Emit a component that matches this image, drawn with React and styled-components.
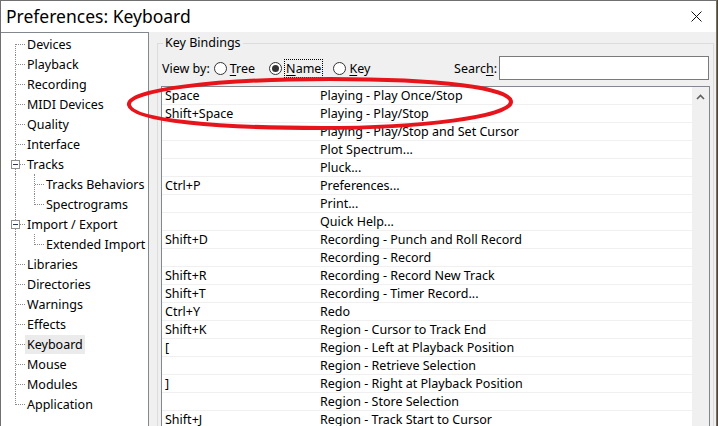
import React from "react";
import styled, { createGlobalStyle, css } from "styled-components";

const GlobalStyle = createGlobalStyle`
  html, body {
    margin: 0;
    padding: 0;
    background: #5b4528;
    overflow: hidden;
  }
  body {
    font-family: "Noto Sans", "Open Sans", sans-serif;
    font-size: 12.5px;
    color: #000;
  }
  * {
    box-sizing: border-box;
  }
`;

const treeItems = [
  { label: "Devices", level: 0, kind: "first" },
  { label: "Playback", level: 0, kind: "tee" },
  { label: "Recording", level: 0, kind: "tee" },
  { label: "MIDI Devices", level: 0, kind: "tee" },
  { label: "Quality", level: 0, kind: "tee" },
  { label: "Interface", level: 0, kind: "tee" },
  { label: "Tracks", level: 0, kind: "tee", box: true },
  { label: "Tracks Behaviors", level: 1, kind: "tee" },
  { label: "Spectrograms", level: 1, kind: "last" },
  { label: "Import / Export", level: 0, kind: "tee", box: true },
  { label: "Extended Import", level: 1, kind: "last" },
  { label: "Libraries", level: 0, kind: "tee" },
  { label: "Directories", level: 0, kind: "tee" },
  { label: "Warnings", level: 0, kind: "tee" },
  { label: "Effects", level: 0, kind: "tee" },
  { label: "Keyboard", level: 0, kind: "tee", selected: true },
  { label: "Mouse", level: 0, kind: "tee" },
  { label: "Modules", level: 0, kind: "tee" },
  { label: "Application", level: 0, kind: "last" },
];

const bindings = [
  ["Space", "Playing - Play Once/Stop"],
  ["Shift+Space", "Playing - Play/Stop"],
  ["", "Playing - Play/Stop and Set Cursor"],
  ["", "Plot Spectrum..."],
  ["", "Pluck..."],
  ["Ctrl+P", "Preferences..."],
  ["", "Print..."],
  ["", "Quick Help..."],
  ["Shift+D", "Recording - Punch and Roll Record"],
  ["", "Recording - Record"],
  ["Shift+R", "Recording - Record New Track"],
  ["Shift+T", "Recording - Timer Record..."],
  ["Ctrl+Y", "Redo"],
  ["Shift+K", "Region - Cursor to Track End"],
  ["[", "Region - Left at Playback Position"],
  ["", "Region - Retrieve Selection"],
  ["]", "Region - Right at Playback Position"],
  ["", "Region - Store Selection"],
  ["Shift+J", "Region - Track Start to Cursor"],
];

const App = () => {
  return (
    <>
      <GlobalStyle />
      <Window>
        <TitleBar>
          <Title>Preferences: Keyboard</Title>
          <Close viewBox="0 0 11 11">
            <path d="M0.5 0.5 L10.5 10.5 M10.5 0.5 L0.5 10.5" />
          </Close>
        </TitleBar>

        <Body>
          <Tree>
            {treeItems.map((item) => (
              <TreeRow key={item.label}>
                {item.level === 1 && <Branch $kind="pipe" />}
                <Branch $kind={item.kind}>
                  {item.box && <ExpandBox />}
                </Branch>
                <TreeLabel $selected={item.selected}>{item.label}</TreeLabel>
              </TreeRow>
            ))}
          </Tree>

          <Content>
            <GroupBox>
              <Legend>Key Bindings</Legend>

              <ViewRow>
                <span>View by:</span>
                <Option $gap={4}>
                  <Radio />
                  <span>
                    <Mnemonic>T</Mnemonic>ree
                  </span>
                </Option>
                <Option $gap={14}>
                  <Radio $checked />
                  <Focused>
                    <Mnemonic>N</Mnemonic>ame
                  </Focused>
                </Option>
                <Option $gap={11}>
                  <Radio />
                  <span>
                    <Mnemonic>K</Mnemonic>ey
                  </span>
                </Option>

                <Search>
                  <span>
                    Searc<Mnemonic>h</Mnemonic>:
                  </span>
                  <SearchInput />
                </Search>
              </ViewRow>

              <List>
                <Rows>
                  {bindings.map(([key, action], i) => (
                    <Row key={i}>
                      <KeyCell>{key}</KeyCell>
                      <span>{action}</span>
                    </Row>
                  ))}
                </Rows>
                <ScrollBar>
                  <svg width="9" height="6" viewBox="0 0 9 6">
                    <path d="M1 5 L4.5 1.5 L8 5" fill="none" stroke="#606060" strokeWidth="1.6" />
                  </svg>
                </ScrollBar>
              </List>
            </GroupBox>
          </Content>
        </Body>

        {/* hand drawn red annotation over the first two rows */}
        <Annotation viewBox="0 0 718 426">
          <path d="M129 105 C126 90 215 79 330 79 C440 79 512 88 511 102 C510 117 420 128 322 128 C220 128 132 121 129 105 Z" />
        </Annotation>
      </Window>
    </>
  );
};

export default App;

const Window = styled.div`
  position: relative;
  width: 717px;
  height: 426px;
  overflow: hidden;
  background: #f0f0f0;
  border: 1px solid #707070;
  border-bottom: none;
  display: flex;
  flex-direction: column;
`;

const TitleBar = styled.div`
  height: 31px;
  flex: none;
  background: #fff;
  display: flex;
  align-items: center;
  justify-content: space-between;
  padding: 0 14px 0 5px;
`;

const Title = styled.div`
  font-size: 17.5px;
  line-height: 22px;
  color: #000;
  margin-top: -2px;
`;

const Close = styled.svg`
  width: 11px;
  height: 11px;
  margin-top: -1px;
  stroke: #111;
  stroke-width: 1;
  fill: none;
`;

const Body = styled.div`
  flex: 1;
  display: flex;
  min-height: 0;
`;

const Tree = styled.div`
  width: 148px;
  flex: none;
  background: #fff;
  border-top: 1px solid #828790;
  border-right: 1px solid #828790;
  padding: 1px 0 0 5px;
`;

const TreeRow = styled.div`
  height: 20px;
  display: flex;
  align-items: center;
`;

const dotted = "1px dotted #8a8a8a";

const Branch = styled.span`
  position: relative;
  width: 19px;
  height: 20px;
  flex: none;

  &::before {
    content: "";
    position: absolute;
    left: 9px;
    top: ${(p) => (p.$kind === "first" ? "10px" : "0")};
    height: ${(p) => (p.$kind === "first" || p.$kind === "last" ? "11px" : "20px")};
    border-left: ${dotted};
  }

  ${(p) =>
    p.$kind !== "pipe" &&
    css`
      &::after {
        content: "";
        position: absolute;
        left: 10px;
        top: 10px;
        width: 9px;
        border-top: ${dotted};
      }
    `}
`;

const ExpandBox = styled.span`
  position: absolute;
  z-index: 1;
  left: 5px;
  top: 6px;
  width: 9px;
  height: 9px;
  background: #fff;
  border: 1px solid #919191;

  &::after {
    content: "";
    position: absolute;
    left: 1px;
    top: 3px;
    width: 5px;
    border-top: 1px solid #2a3a5a;
  }
`;

const TreeLabel = styled.span`
  padding: 0 2px;
  line-height: 19px;
  height: 19px;
  white-space: nowrap;
  background: ${(p) => (p.$selected ? "#ebebeb" : "transparent")};
`;

const Content = styled.div`
  flex: 1;
  padding: 3px 2px 0 8px;
  min-width: 0;
`;

const GroupBox = styled.fieldset`
  margin: 0;
  padding: 0 3px;
  border: 1px solid #dcdcdc;
  border-bottom: none;
  min-width: 0;
  height: 100%;
`;

const Legend = styled.legend`
  padding: 0 2px;
  margin-left: 2px;
  line-height: 16px;
`;

const ViewRow = styled.div`
  height: 24px;
  margin-top: 5px;
  padding-left: 1px;
  display: flex;
  align-items: center;
  white-space: nowrap;
`;

const Option = styled.label`
  display: flex;
  align-items: center;
  gap: 3px;
  margin-left: ${(p) => p.$gap}px;
`;

const Radio = styled.span`
  position: relative;
  width: 13px;
  height: 13px;
  border-radius: 50%;
  border: 1px solid #333;
  background: #fff;

  ${(p) =>
    p.$checked &&
    css`
      &::after {
        content: "";
        position: absolute;
        left: 2px;
        top: 2px;
        width: 7px;
        height: 7px;
        border-radius: 50%;
        background: #333;
      }
    `}
`;

const Focused = styled.span`
  padding: 0 1px;
  line-height: 17px;
  outline: 1px dotted #000;
  outline-offset: 0;
`;

const Mnemonic = styled.u`
  text-underline-offset: 2px;
`;

const Search = styled.div`
  margin-left: auto;
  display: flex;
  align-items: center;
  gap: 2px;
`;

const SearchInput = styled.div`
  width: 210px;
  height: 24px;
  margin-right: 1px;
  background: #fff;
  border: 1px solid #7a7a7a;
`;

const List = styled.div`
  margin-top: 6px;
  height: 400px;
  display: flex;
  background: #fff;
  border: 1px solid #828790;
`;

const Rows = styled.div`
  flex: 1;
  min-width: 0;
`;

const Row = styled.div`
  height: 18px;
  display: grid;
  grid-template-columns: 155px 1fr;
  align-items: center;
  padding: 1px 0 0 3px;
  border-bottom: 1px solid #f0f0f0;
  line-height: 16px;
  white-space: nowrap;
`;

const KeyCell = styled.span`
  color: #000;
`;

const ScrollBar = styled.div`
  width: 17px;
  flex: none;
  background: #f0f0f0;
  display: flex;
  justify-content: center;
  padding-top: 7px;
  svg {
    display: block;
  }
`;

const Annotation = styled.svg`
  position: absolute;
  left: -1px;
  top: -1px;
  width: 718px;
  height: 426px;
  pointer-events: none;
  fill: none;
  stroke: #e8141c;
  stroke-width: 4;
`;
